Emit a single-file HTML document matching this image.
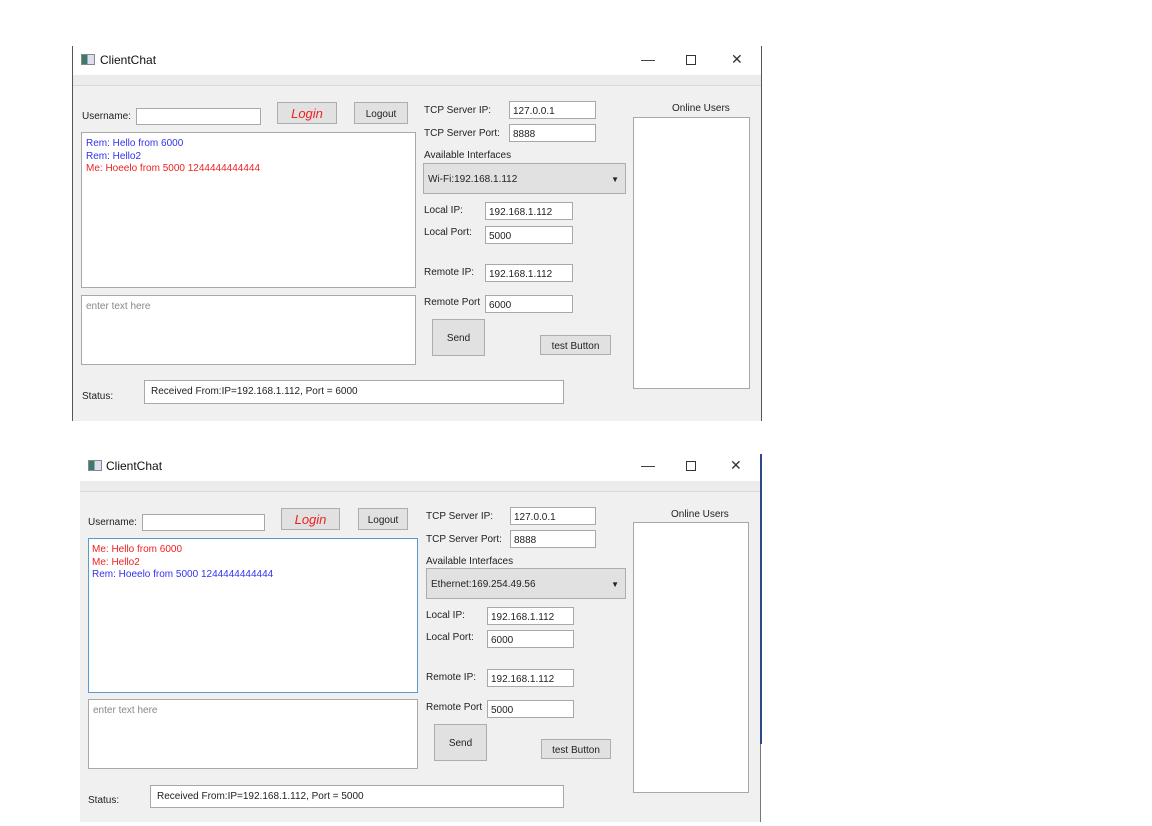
<!DOCTYPE html>
<html><head><meta charset="utf-8"><style>
*{box-sizing:border-box;margin:0;padding:0}
body{width:1152px;height:826px;background:#fff;position:relative;overflow:hidden;font-family:"Liberation Sans",sans-serif;font-size:10px;color:#222}
.a{position:absolute}
.body{background:#f0f0f0}
.strip{background:#ececec;border-bottom:1px solid #d8d8d8}
.in{position:absolute;background:#fff;border:1px solid #a8a8a8;padding:4px 3px 2px;font-size:10px;line-height:11px;white-space:nowrap}
.btn{position:absolute;background:#e1e1e1;border:1px solid #adadad;display:flex;align-items:center;justify-content:center;font-size:10px;padding-top:2px}
.lbl{position:absolute;font-size:10px;line-height:12px;white-space:nowrap;margin-top:2px}
.ttl{position:absolute;font-size:12px;color:#111}
.ico{position:absolute;width:14px;height:11px;border:1px solid #888;background:linear-gradient(90deg,#3d7a6a 0 45%,#dde 45%)}
.ctl{position:absolute;font-size:14px;color:#333}
.blue{color:#3333ee}.red{color:#ee2222}
</style></head><body>

<!-- Window 1 -->
<div class="a" style="left:72px;top:46px;width:1px;height:375px;background:#555"></div>
<div class="a" style="left:761px;top:46px;width:1px;height:375px;background:#555"></div>
<div class="ico" style="left:81px;top:54px"></div>
<div class="ttl" style="left:100px;top:53px">ClientChat</div>
<div class="ctl" style="left:641px;top:51px">—</div>
<div class="a" style="left:686px;top:55px;width:10px;height:10px;border:1px solid #333"></div>
<div class="ctl" style="left:731px;top:51px">✕</div>
<div class="a strip" style="left:73px;top:75px;width:688px;height:11px"></div>
<div class="a body" style="left:73px;top:86px;width:688px;height:335px"></div>

<div class="lbl" style="left:82px;top:109px">Username:</div>
<div class="in" style="left:136px;top:108px;width:125px;height:17px"></div>
<div class="btn" style="left:277px;top:102px;width:60px;height:22px;color:#e22;font-style:italic;font-size:13px;padding-top:0">Login</div>
<div class="btn" style="left:354px;top:102px;width:54px;height:22px">Logout</div>
<div class="in" style="left:81px;top:132px;width:335px;height:156px;padding:5px 4px;line-height:12.5px">
<div class="blue">Rem: Hello from 6000</div><div class="blue">Rem: Hello2</div><div class="red">Me: Hoeelo from 5000 1244444444444</div></div>
<div class="in" style="left:81px;top:295px;width:335px;height:70px;padding:5px 4px;color:#888">enter text here</div>
<div class="lbl" style="left:82px;top:389px">Status:</div>
<div class="in" style="left:144px;top:380px;width:420px;height:24px;padding:5px 6px">Received From:IP=192.168.1.112, Port = 6000</div>

<div class="lbl" style="left:424px;top:103px">TCP Server IP:</div>
<div class="in" style="left:509px;top:101px;width:87px;height:18px">127.0.0.1</div>
<div class="lbl" style="left:424px;top:126px">TCP Server Port:</div>
<div class="in" style="left:509px;top:124px;width:87px;height:18px">8888</div>
<div class="lbl" style="left:424px;top:148px">Available Interfaces</div>
<div class="btn" style="left:423px;top:163px;width:203px;height:31px;justify-content:flex-start;padding-left:4px">Wi-Fi:192.168.1.112<span style="position:absolute;right:6px;font-size:8px">▼</span></div>
<div class="lbl" style="left:424px;top:203px">Local IP:</div>
<div class="in" style="left:485px;top:202px;width:88px;height:18px">192.168.1.112</div>
<div class="lbl" style="left:424px;top:225px">Local Port:</div>
<div class="in" style="left:485px;top:226px;width:88px;height:18px">5000</div>
<div class="lbl" style="left:424px;top:265px">Remote IP:</div>
<div class="in" style="left:485px;top:264px;width:88px;height:18px">192.168.1.112</div>
<div class="lbl" style="left:424px;top:295px">Remote Port</div>
<div class="in" style="left:485px;top:295px;width:88px;height:18px">6000</div>
<div class="btn" style="left:432px;top:319px;width:53px;height:37px">Send</div>
<div class="btn" style="left:540px;top:335px;width:71px;height:20px">test Button</div>
<div class="lbl" style="left:672px;top:101px">Online Users</div>
<div class="in" style="left:633px;top:117px;width:117px;height:272px"></div>

<!-- Window 2 -->
<div class="a" style="left:760px;top:454px;width:2px;height:290px;background:#2a4a8a"></div>
<div class="a" style="left:760px;top:744px;width:1px;height:78px;background:#777"></div>
<div class="ico" style="left:88px;top:460px"></div>
<div class="ttl" style="left:106px;top:459px">ClientChat</div>
<div class="ctl" style="left:641px;top:457px">—</div>
<div class="a" style="left:686px;top:461px;width:10px;height:10px;border:1px solid #333"></div>
<div class="ctl" style="left:730px;top:457px">✕</div>
<div class="a strip" style="left:80px;top:481px;width:680px;height:11px"></div>
<div class="a body" style="left:80px;top:492px;width:680px;height:330px"></div>

<div class="lbl" style="left:88px;top:515px">Username:</div>
<div class="in" style="left:142px;top:514px;width:123px;height:17px"></div>
<div class="btn" style="left:281px;top:508px;width:59px;height:22px;color:#e22;font-style:italic;font-size:13px;padding-top:0">Login</div>
<div class="btn" style="left:358px;top:508px;width:50px;height:22px">Logout</div>
<div class="in" style="left:88px;top:538px;width:330px;height:155px;border-color:#5a9ad0;padding:5px 3px;line-height:12.5px">
<div class="red">Me: Hello from 6000</div><div class="red">Me: Hello2</div><div class="blue">Rem: Hoeelo from 5000 1244444444444</div></div>
<div class="in" style="left:88px;top:699px;width:330px;height:70px;padding:5px 4px;color:#888">enter text here</div>
<div class="lbl" style="left:88px;top:793px">Status:</div>
<div class="in" style="left:150px;top:785px;width:414px;height:23px;padding:5px 6px">Received From:IP=192.168.1.112, Port = 5000</div>

<div class="lbl" style="left:426px;top:509px">TCP Server IP:</div>
<div class="in" style="left:510px;top:507px;width:86px;height:18px">127.0.0.1</div>
<div class="lbl" style="left:426px;top:532px">TCP Server Port:</div>
<div class="in" style="left:510px;top:530px;width:86px;height:18px">8888</div>
<div class="lbl" style="left:426px;top:554px">Available Interfaces</div>
<div class="btn" style="left:426px;top:568px;width:200px;height:31px;justify-content:flex-start;padding-left:4px">Ethernet:169.254.49.56<span style="position:absolute;right:6px;font-size:8px">▼</span></div>
<div class="lbl" style="left:426px;top:608px">Local IP:</div>
<div class="in" style="left:487px;top:607px;width:87px;height:18px">192.168.1.112</div>
<div class="lbl" style="left:426px;top:630px">Local Port:</div>
<div class="in" style="left:487px;top:630px;width:87px;height:18px">6000</div>
<div class="lbl" style="left:426px;top:670px">Remote IP:</div>
<div class="in" style="left:487px;top:669px;width:87px;height:18px">192.168.1.112</div>
<div class="lbl" style="left:426px;top:700px">Remote Port</div>
<div class="in" style="left:487px;top:700px;width:87px;height:18px">5000</div>
<div class="btn" style="left:434px;top:724px;width:53px;height:37px">Send</div>
<div class="btn" style="left:541px;top:739px;width:70px;height:20px">test Button</div>
<div class="lbl" style="left:671px;top:507px">Online Users</div>
<div class="in" style="left:633px;top:522px;width:116px;height:271px"></div>
</body></html>
